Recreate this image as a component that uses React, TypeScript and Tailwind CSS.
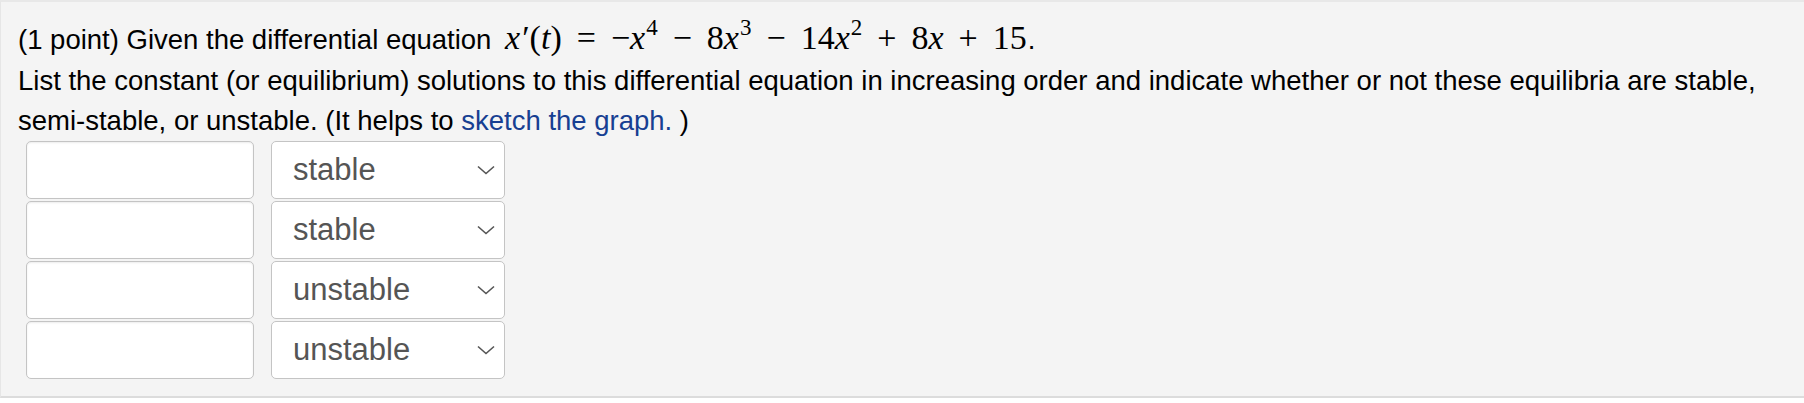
import React from 'react';

const rows = ['stable', 'stable', 'unstable', 'unstable'];

function Chevron() {
  return (
    <svg width="18" height="10" viewBox="0 0 18 10" fill="none">
      <path d="M1 1.5 L9 8.5 L17 1.5" stroke="#555" strokeWidth="1.6" />
    </svg>
  );
}

function Equation() {
  // x'(t) = -x^4 - 8x^3 - 14x^2 + 8x + 15
  return (
    <span className="font-['Liberation_Serif',serif] text-[34px] leading-[30px] ml-[6px]">
      <i>x</i>
      <span className="ml-[2px]">′</span>
      <span>(</span>
      <i>t</i>
      <span>)</span>
      <span className="mx-[15px]">=</span>
      <span>−</span>
      <i>x</i>
      <sup className="text-[23px] -top-[14px] ml-[1px]">4</sup>
      <span className="mx-[15px]">−</span>
      <span>8</span>
      <i>x</i>
      <sup className="text-[23px] -top-[14px] ml-[1px]">3</sup>
      <span className="mx-[15px]">−</span>
      <span>14</span>
      <i>x</i>
      <sup className="text-[23px] -top-[14px] ml-[1px]">2</sup>
      <span className="mx-[15px]">+</span>
      <span>8</span>
      <i>x</i>
      <span className="mx-[15px]">+</span>
      <span>15</span>
      <span className="font-['Liberation_Sans',Arial,sans-serif] text-[27.5px] ml-[1px]">.</span>
    </span>
  );
}

export default function App() {
  return (
    <div className="bg-white h-[403px] w-full">
      <div className="bg-[#f4f4f4] border-t-2 border-t-[#e8e8e8] border-b-2 border-b-[#dcdcdc] border-l border-l-[#e6e6e6] pl-[17px] pr-4 pt-[17px] pb-[17px] font-['Liberation_Sans',Arial,sans-serif] text-[27.5px] text-black">
        <div className="leading-[42px] h-[42px] whitespace-nowrap">
          (1 point) Given the differential equation <Equation />
        </div>
        <div className="leading-[40px] whitespace-nowrap">
          List the constant (or equilibrium) solutions to this differential equation in increasing order and indicate whether or not these equilibria are stable,
        </div>
        <div className="leading-[40px] whitespace-nowrap">
          semi-stable, or unstable. (It helps to <a className="text-[#173f92]">sketch the graph.</a>&nbsp;)
        </div>

        <div className="ml-[8px] flex flex-col gap-[2px]">
          {rows.map((r, i) => (
            <div key={i} className="flex items-center gap-[17px]">
              <input
                type="text"
                className="w-[228px] h-[58px] bg-white border border-[#c4c4c4] rounded-[5px] shadow-[inset_0_1px_2px_rgba(0,0,0,0.08)] outline-none px-3"
              />
              <div className="w-[234px] h-[58px] bg-white border border-[#c4c4c4] rounded-[5px] flex items-center justify-between pl-[21px] pr-[9px]">
                <span className="text-[#555] text-[31px]">{r}</span>
                <Chevron />
              </div>
            </div>
          ))}
        </div>
      </div>
    </div>
  );
}
